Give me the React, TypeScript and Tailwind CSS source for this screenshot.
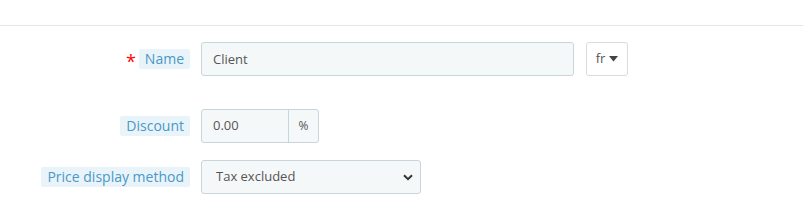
import { FC, ReactNode } from "react";

const Label: FC<{ children: ReactNode; required?: boolean }> = ({ children, required }) => (
  <div className="w-[190px] shrink-0 flex justify-end items-center">
    {required && <span className="text-[#f00] text-[18px] leading-none mr-[3px] mt-[3px]">*</span>}
    <span className="bg-[#e9f4fa] text-[#4a98c6] text-[14px] leading-[20px] px-[6px] rounded-[2px]">
      {children}
    </span>
  </div>
);

const App: FC = () => {
  return (
    <div className="w-[803px] h-[203px] bg-white overflow-hidden text-[#555] font-['Open_Sans',sans-serif]">
      <div className="h-[26px] border-b border-[#e6e6e6]" />

      <div className="flex items-center mt-[16px]">
        <Label required>Name</Label>
        <input
          defaultValue="Client"
          className="ml-[11px] w-[373px] h-[34px] px-[11px] text-[13px] bg-[#f5f8f9] border border-[#c7d6db] rounded-[3px] outline-none text-[#555]"
        />
        <button className="ml-[12px] w-[42px] h-[34px] border border-[#dcdcdc] rounded-[3px] bg-white flex items-center justify-center gap-[4px] text-[13px] text-[#555]">
          fr
          <svg width="9" height="6" viewBox="0 0 9 6">
            <path d="M0 0h9L4.5 5.5z" fill="#444" />
          </svg>
        </button>
      </div>

      <div className="flex items-center mt-[33px]">
        <Label>Discount</Label>
        <div className="ml-[11px] flex h-[34px] border border-[#c7d6db] rounded-[3px] bg-[#f5f8f9] overflow-hidden">
          <input
            defaultValue="0.00"
            className="w-[86px] px-[11px] text-[13px] bg-transparent outline-none text-[#555]"
          />
          <span className="w-[30px] border-l border-[#c7d6db] flex items-center justify-center text-[12px] text-[#555]">
            %
          </span>
        </div>
      </div>

      <div className="flex items-center mt-[17px]">
        <Label>Price display method</Label>
        <div className="ml-[11px] relative w-[220px] h-[34px]">
          <select className="appearance-none w-full h-full pl-[14px] pr-[30px] text-[13px] bg-[#f5f8f9] border border-[#c7d6db] rounded-[3px] outline-none text-[#555]">
            <option>Tax excluded</option>
            <option>Tax included</option>
          </select>
          <svg
            className="absolute right-[8px] top-[14px] pointer-events-none"
            width="10"
            height="7"
            viewBox="0 0 10 7"
          >
            <path d="M1 1.2l4 4 4-4" fill="none" stroke="#333" strokeWidth="2" />
          </svg>
        </div>
      </div>
    </div>
  );
};

export default App;
